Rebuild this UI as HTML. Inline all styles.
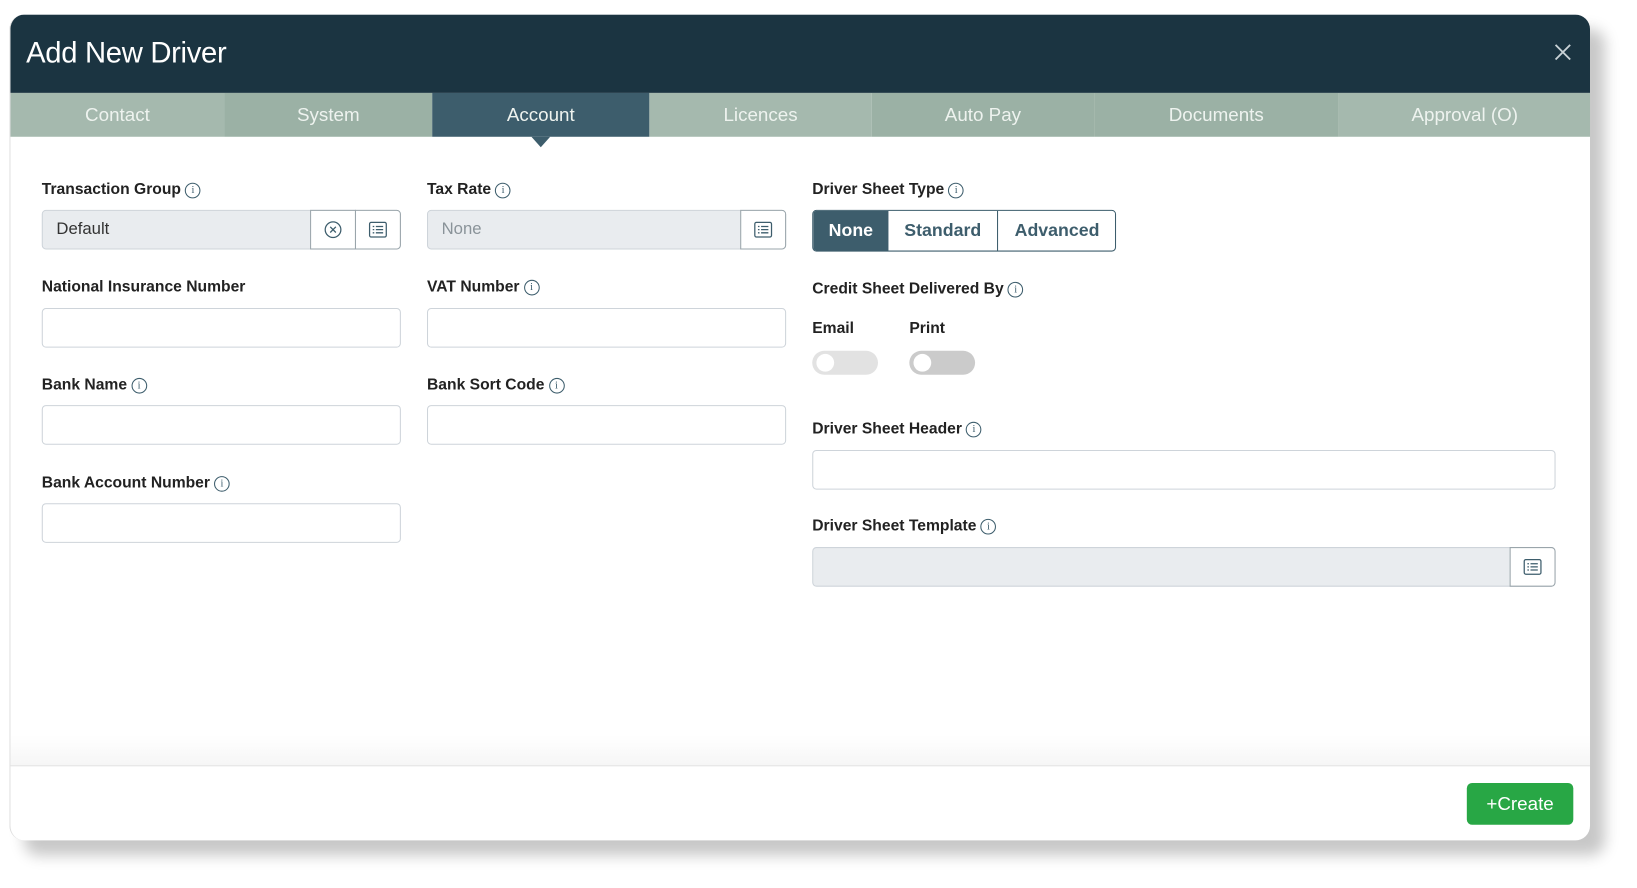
<!DOCTYPE html>
<html><head><meta charset="utf-8"><style>
*{box-sizing:border-box;margin:0;padding:0}
html,body{width:1637px;height:888px;overflow:hidden;background:#fff;font-family:"Liberation Sans",sans-serif}
#w{position:absolute;left:0;top:0;width:1568px;height:851px;transform:scale(1.044);transform-origin:0 0}
.modal{position:absolute;left:9px;top:14px;width:1514px;height:791px;background:#fff;border-radius:14px;overflow:hidden;box-shadow:14px 14px 14px rgba(0,0,0,0.22);border-left:1px solid #ddd}
.hdr{position:absolute;left:0;top:0;right:0;height:75px;background:#1b3441;color:#fff}
.hdr h1{position:absolute;left:15px;top:21px;font-size:28px;font-weight:normal;letter-spacing:-0.3px}
.close{position:absolute;left:1479px;top:28px;width:16px;height:16px}
.tabs{position:absolute;top:75px;left:0;right:0;height:42px}
.tab{position:absolute;top:0;height:42px;line-height:42px;text-align:center;color:#eef3ef;font-size:18px}
.caret{position:absolute;left:499px;top:117px;width:0;height:0;border-left:9px solid transparent;border-right:9px solid transparent;border-top:10px solid #3d5d6c}
.lbl{position:absolute;font-size:15px;font-weight:bold;color:#222;white-space:nowrap}
.info{display:inline-block;width:15px;height:15px;border:1.2px solid #3d5d6c;border-radius:50%;font:normal 10px "Liberation Serif",serif;color:#3d5d6c;text-align:center;line-height:13px;vertical-align:1px;margin-left:4px}
.inp{position:absolute;height:38px;border:1px solid #ced4da;border-radius:4px;background:#fff}
.gray{background:#e9ecef}
.btn{position:absolute;top:-1px;width:44px;height:38px;border:1px solid #9aa5ab;background:#fff;display:flex;align-items:center;justify-content:center}
.txt{position:absolute;left:13px;top:9px;font-size:16px}
.tog{position:absolute;width:63px;height:23px;border-radius:12px}
.tog::after{content:"";position:absolute;left:4px;top:3px;width:17px;height:17px;border-radius:50%;background:#fff}
</style></head><body><div id="w">
<div class="modal">
 <div class="hdr"><h1>Add New Driver</h1>
  <svg class="close" viewBox="0 0 16 16"><path d="M1 1L15 15M15 1L1 15" stroke="#c9d2d6" stroke-width="1.8"/></svg></div>
 <div class="tabs">
  <div class="tab" style="left:0;width:205px;background:#a5b9ae">Contact</div>
  <div class="tab" style="left:205px;width:199px;background:#9bb1a5">System</div>
  <div class="tab" style="left:404px;width:208px;background:#3d5d6c">Account</div>
  <div class="tab" style="left:612px;width:213px;background:#a5b9ae">Licences</div>
  <div class="tab" style="left:825px;width:213px;background:#9bb1a5">Auto Pay</div>
  <div class="tab" style="left:1038px;width:234px;background:#9bb1a5">Documents</div>
  <div class="tab" style="left:1272px;width:242px;background:#a5b9ae">Approval (O)</div>
 </div>
 <div class="caret"></div>
 <div style="position:absolute;left:0;right:0;top:690px;height:29px;background:linear-gradient(#fff,#f6f6f6)"></div>
 <div style="position:absolute;left:0;right:0;top:719px;border-top:1px solid #e2e2e2"></div>
 <div style="position:absolute;left:1395px;top:736px;width:102px;height:40px;background:#28a745;border-radius:5px;color:#fff;font-size:18px;line-height:40px;text-align:center">+Create</div>
</div>
<div class="lbl" style="left:40px;top:173px">Transaction Group<span class="info">i</span></div>
<div class="inp gray" style="left:40px;top:201px;width:344px"><span class="txt" style="color:#333">Default</span>
 <div class="btn" style="left:256px;border-radius:0"><svg width="18" height="18" viewBox="0 0 18 18"><circle cx="9" cy="9" r="7.5" fill="none" stroke="#3d5d6c" stroke-width="1.2"/><path d="M6.3 6.3L11.7 11.7M11.7 6.3L6.3 11.7" stroke="#3d5d6c" stroke-width="1.2"/></svg></div>
 <div class="btn" style="left:299px;border-radius:0 4px 4px 0"><svg width="18" height="16" viewBox="0 0 18 16"><rect x="1" y="1" width="16" height="14" rx="1.5" fill="none" stroke="#3d5d6c" stroke-width="1.2"/><path d="M4 5h1.5M4 8h1.5M4 11h1.5M7 5h7M7 8h7M7 11h7" stroke="#3d5d6c" stroke-width="1.2"/></svg></div></div>
<div class="lbl" style="left:409px;top:173px">Tax Rate<span class="info">i</span></div>
<div class="inp gray" style="left:409px;top:201px;width:344px"><span class="txt" style="color:#8a9399">None</span>
 <div class="btn" style="left:299px;border-radius:0 4px 4px 0"><svg width="18" height="16" viewBox="0 0 18 16"><rect x="1" y="1" width="16" height="14" rx="1.5" fill="none" stroke="#3d5d6c" stroke-width="1.2"/><path d="M4 5h1.5M4 8h1.5M4 11h1.5M7 5h7M7 8h7M7 11h7" stroke="#3d5d6c" stroke-width="1.2"/></svg></div></div>
<div class="lbl" style="left:40px;top:266px">National Insurance Number</div>
<div class="inp" style="left:40px;top:295px;width:344px"></div>
<div class="lbl" style="left:409px;top:266px">VAT Number<span class="info">i</span></div>
<div class="inp" style="left:409px;top:295px;width:344px"></div>
<div class="lbl" style="left:40px;top:360px">Bank Name<span class="info">i</span></div>
<div class="inp" style="left:40px;top:388px;width:344px"></div>
<div class="lbl" style="left:409px;top:360px">Bank Sort Code<span class="info">i</span></div>
<div class="inp" style="left:409px;top:388px;width:344px"></div>
<div class="lbl" style="left:40px;top:454px">Bank Account Number<span class="info">i</span></div>
<div class="inp" style="left:40px;top:482px;width:344px"></div>

<div class="lbl" style="left:778px;top:173px">Driver Sheet Type<span class="info">i</span></div>
<div style="position:absolute;left:778px;top:201px;width:291px;height:40px;border:1px solid #3d5d6c;border-radius:4px;overflow:hidden;font-size:17px;font-weight:bold;color:#3d5d6c">
 <div style="position:absolute;left:0;top:0;width:72px;height:38px;background:#3d5d6c;color:#fff;text-align:center;line-height:38px">None</div>
 <div style="position:absolute;left:72px;top:0;width:105px;height:38px;text-align:center;line-height:38px;border-right:1px solid #3d5d6c">Standard</div>
 <div style="position:absolute;left:177px;top:0;width:113px;height:38px;text-align:center;line-height:38px">Advanced</div>
</div>
<div class="lbl" style="left:778px;top:268px">Credit Sheet Delivered By<span class="info">i</span></div>
<div class="lbl" style="left:778px;top:306px">Email</div>
<div class="lbl" style="left:871px;top:306px">Print</div>
<div class="tog" style="left:778px;top:336px;background:#e2e2e2"></div>
<div class="tog" style="left:871px;top:336px;background:#cbcbcb"></div>
<div class="lbl" style="left:778px;top:402px">Driver Sheet Header<span class="info">i</span></div>
<div class="inp" style="left:778px;top:431px;width:712px"></div>
<div class="lbl" style="left:778px;top:495px">Driver Sheet Template<span class="info">i</span></div>
<div class="inp gray" style="left:778px;top:524px;width:712px">
 <div class="btn" style="left:667px;border-radius:0 4px 4px 0"><svg width="18" height="16" viewBox="0 0 18 16"><rect x="1" y="1" width="16" height="14" rx="1.5" fill="none" stroke="#3d5d6c" stroke-width="1.2"/><path d="M4 5h1.5M4 8h1.5M4 11h1.5M7 5h7M7 8h7M7 11h7" stroke="#3d5d6c" stroke-width="1.2"/></svg></div></div>
</div></body></html>
